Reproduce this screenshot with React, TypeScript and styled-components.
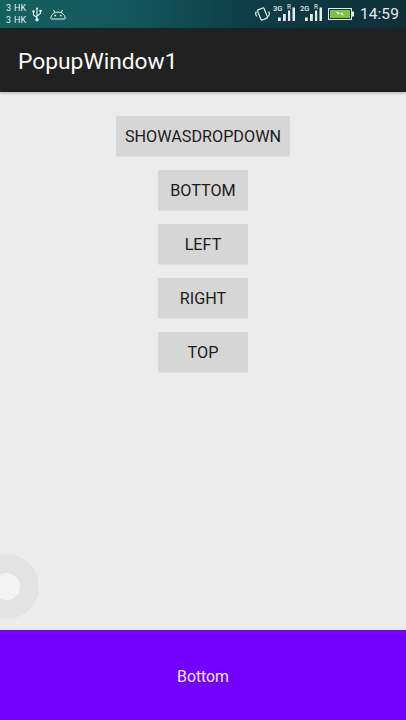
import React from "react";
import styled, { createGlobalStyle } from "styled-components";

const Global = createGlobalStyle`
  html, body { margin: 0; padding: 0; background: #ececec; }
  * { box-sizing: border-box; }
`;

const Screen = styled.div`
  position: relative;
  width: 406px;
  height: 720px;
  display: flex;
  flex-direction: column;
  overflow: hidden;
  background: #ececec;
  font-family: Roboto, "Liberation Sans", sans-serif;
`;

const StatusBar = styled.div`
  height: 28px;
  flex: none;
  display: flex;
  align-items: center;
  justify-content: space-between;
  padding: 0 7px 0 6px;
  color: #e4eeee;
  background: linear-gradient(90deg, #15605f 0%, #14585e 30%, #0e3e47 60%, #0e2f38 100%);
`;

const StatusGroup = styled.div`
  display: flex;
  align-items: center;
`;

const Carrier = styled.div`
  font-size: 9px;
  line-height: 12px;
  width: 26px;
  letter-spacing: 0.3px;
`;

const Clock = styled.span`
  font-size: 15.5px;
  margin-left: 5px;
  letter-spacing: 0.1px;
`;

const Signal = styled.div`
  position: relative;
  width: 24px;
  height: 24px;
  margin-left: 3px;
`;

const SignalLabel = styled.span`
  position: absolute;
  left: 0;
  top: 3px;
  font-size: 7.5px;
  font-weight: 500;
  line-height: 7px;
`;

const SignalRoam = styled.span`
  position: absolute;
  left: 14px;
  top: 2px;
  font-size: 6.5px;
  line-height: 7px;
`;

const ActionBar = styled.div`
  height: 64px;
  flex: none;
  display: flex;
  align-items: center;
  padding: 2px 0 0 18px;
  background: #212121;
  color: #fafafa;
  font-size: 22.8px;
  box-shadow: 0 1px 3px rgba(0, 0, 0, 0.25);
  z-index: 1;
`;

const Content = styled.div`
  flex: 1;
  display: flex;
  flex-direction: column;
  align-items: center;
  gap: 14px;
  padding-top: 24px;
`;

const ActionButton = styled.button`
  height: 40px;
  min-width: 90px;
  padding: 0 9px;
  border: 0;
  border-radius: 1px;
  background: #d6d6d6;
  color: #1c1c1c;
  font-family: inherit;
  font-size: 16.2px;
  box-shadow: 0 1px 1px rgba(0, 0, 0, 0.06);
`;

const BottomPanel = styled.div`
  height: 90px;
  flex: none;
  display: flex;
  align-items: center;
  justify-content: center;
  padding-top: 2px;
  background: #7300ff;
  color: #f6e6ff;
  font-size: 15.8px;
`;

const FloatingBall = styled.div`
  position: absolute;
  left: -26px;
  top: 554px;
  width: 65px;
  height: 65px;
  border-radius: 50%;
  display: flex;
  align-items: center;
  justify-content: center;
  background: #e3e3e3;
`;

const BallCore = styled.div`
  width: 27px;
  height: 27px;
  border-radius: 50%;
  background: #f3f3f3;
`;

const SignalBars = () => (
  <svg width="24" height="24" viewBox="0 0 24 24" fill="currentColor" style={{ position: "absolute", left: 0, top: 0 }}>
    <rect x="5" y="15.5" width="2.800" height="3.500" />
    <rect x="10" y="12" width="2.800" height="7" />
    <rect x="15" y="8.500" width="2.200" height="10.500" />
    <rect x="19.500" y="5.500" width="2.500" height="13.500" />
  </svg>
);

const UsbIcon = () => (
  <svg width="10" height="15" viewBox="0 0 10 15" fill="none" stroke="currentColor" strokeWidth="1.1">
    <path d="M5 1.500V12M5 10.500 1.500 8V5M5 9l3.500-2.500V4.500" />
    <path d="M5 0 3.600 2.200h2.800z" fill="currentColor" stroke="none" />
    <circle cx="5" cy="12.800" r="1.700" fill="currentColor" stroke="none" />
    <circle cx="1.500" cy="4.500" r="1.200" fill="currentColor" stroke="none" />
    <rect x="7.400" y="2.800" width="2.200" height="2.200" fill="currentColor" stroke="none" />
  </svg>
);

const AndroidIcon = () => (
  <svg width="16" height="11" viewBox="0 0 16 11" fill="none" stroke="currentColor" strokeWidth="1" style={{ marginLeft: 8 }}>
    <path d="M1.500 10c-.800 0-1-.500-.800-1.200C1.500 5.500 4 3 8 3s6.500 2.500 7.300 5.800c.2.700 0 1.200-.800 1.200z" />
    <path d="M4.800 3.500 3.500.8M11.200 3.500 12.500.8" />
    <circle cx="5.200" cy="6.600" r=".9" fill="currentColor" stroke="none" />
    <circle cx="10.800" cy="6.600" r=".9" fill="currentColor" stroke="none" />
  </svg>
);

const VibrateIcon = () => (
  <svg width="15" height="16" viewBox="0 0 15 16" fill="none" stroke="currentColor" strokeWidth="1.2">
    <rect x="4" y="2.500" width="7" height="11" rx="1" transform="rotate(-22 7.500 8)" />
    <path d="M1.200 5.500.6 8l1 2.500M13.800 5.500l.6 2.500-1 2.500" />
  </svg>
);

const BatteryIcon = () => (
  <svg width="27" height="12" viewBox="0 0 27 12" style={{ marginLeft: 4 }}>
    <rect x=".5" y=".5" width="23" height="11" fill="none" stroke="#e4eeee" />
    <rect x="2" y="2" width="20" height="8" fill="#7fc241" />
    <rect x="24" y="3.500" width="2" height="5" fill="#e4eeee" />
    <path d="M8 3.500l5 2 1-1.500 2 3.500-5-2-1 1.500z" fill="#eef6e0" />
  </svg>
);

const buttons = ["SHOWASDROPDOWN", "BOTTOM", "LEFT", "RIGHT", "TOP"];

export default function App() {
  return (
    <Screen>
      <Global />
      <StatusBar>
        <StatusGroup>
          <Carrier>3 HK<br />3 HK</Carrier>
          <UsbIcon />
          <AndroidIcon />
        </StatusGroup>
        <StatusGroup>
          <VibrateIcon />
          <Signal><SignalLabel>3G</SignalLabel><SignalRoam>R</SignalRoam><SignalBars /></Signal>
          <Signal><SignalLabel>2G</SignalLabel><SignalRoam>R</SignalRoam><SignalBars /></Signal>
          <BatteryIcon />
          <Clock>14:59</Clock>
        </StatusGroup>
      </StatusBar>
      <ActionBar>PopupWindow1</ActionBar>
      <Content>
        {buttons.map((b) => <ActionButton key={b}>{b}</ActionButton>)}
      </Content>
      <FloatingBall><BallCore /></FloatingBall>
      <BottomPanel>Bottom</BottomPanel>
    </Screen>
  );
}
